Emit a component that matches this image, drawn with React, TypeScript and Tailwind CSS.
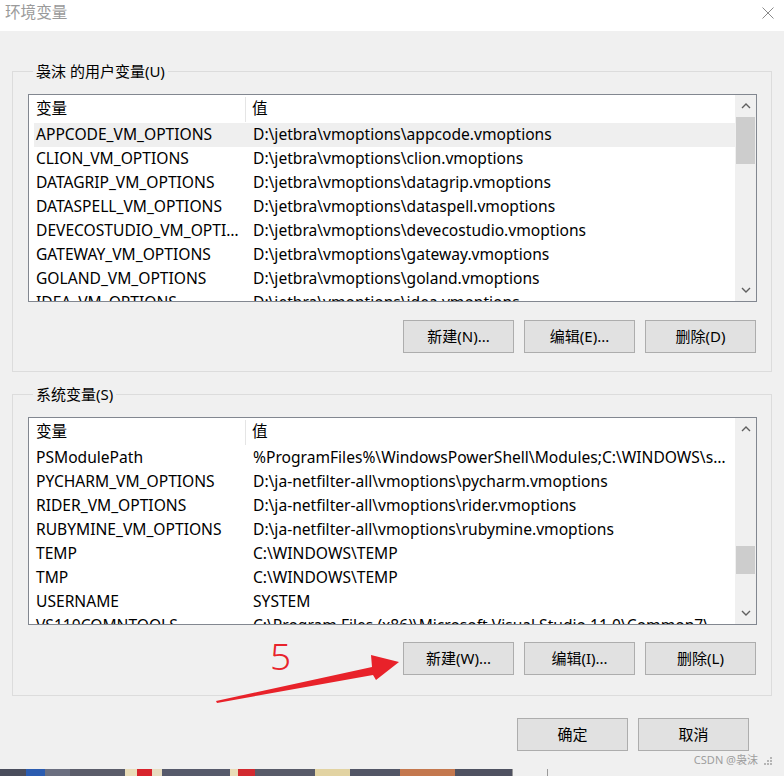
import React from "react"

type Row = { name: string; value: string }

const userVars: Row[] = [
  { name: "APPCODE_VM_OPTIONS", value: "D:\\jetbra\\vmoptions\\appcode.vmoptions" },
  { name: "CLION_VM_OPTIONS", value: "D:\\jetbra\\vmoptions\\clion.vmoptions" },
  { name: "DATAGRIP_VM_OPTIONS", value: "D:\\jetbra\\vmoptions\\datagrip.vmoptions" },
  { name: "DATASPELL_VM_OPTIONS", value: "D:\\jetbra\\vmoptions\\dataspell.vmoptions" },
  { name: "DEVECOSTUDIO_VM_OPTIONS", value: "D:\\jetbra\\vmoptions\\devecostudio.vmoptions" },
  { name: "GATEWAY_VM_OPTIONS", value: "D:\\jetbra\\vmoptions\\gateway.vmoptions" },
  { name: "GOLAND_VM_OPTIONS", value: "D:\\jetbra\\vmoptions\\goland.vmoptions" },
  { name: "IDEA_VM_OPTIONS", value: "D:\\jetbra\\vmoptions\\idea.vmoptions" },
]

const systemVars: Row[] = [
  { name: "PSModulePath", value: "%ProgramFiles%\\WindowsPowerShell\\Modules;C:\\WINDOWS\\system32\\WindowsPowerShell\\v1.0\\Modules" },
  { name: "PYCHARM_VM_OPTIONS", value: "D:\\ja-netfilter-all\\vmoptions\\pycharm.vmoptions" },
  { name: "RIDER_VM_OPTIONS", value: "D:\\ja-netfilter-all\\vmoptions\\rider.vmoptions" },
  { name: "RUBYMINE_VM_OPTIONS", value: "D:\\ja-netfilter-all\\vmoptions\\rubymine.vmoptions" },
  { name: "TEMP", value: "C:\\WINDOWS\\TEMP" },
  { name: "TMP", value: "C:\\WINDOWS\\TEMP" },
  { name: "USERNAME", value: "SYSTEM" },
  { name: "VS110COMNTOOLS", value: "C:\\Program Files (x86)\\Microsoft Visual Studio 11.0\\Common7\\Tools\\" },
]

const font = "font-['Noto_Sans','Noto_Sans_CJK_SC',sans-serif]"

function Chevron({ up }: { up?: boolean }) {
  return (
    <svg width="10" height="6" viewBox="0 0 10 6" className={up ? "" : "rotate-180"}>
      <path d="M1 5 L5 1 L9 5" fill="none" stroke="#606060" strokeWidth="1.4" />
    </svg>
  )
}

function VarList({ rows, highlight, thumbTop, thumbHeight }: { rows: Row[]; highlight?: number; thumbTop: number; thumbHeight: number }) {
  return (
    <div className="flex w-full h-[208px] border border-[#828790] bg-white overflow-hidden">
      <div className="flex-1 min-w-0 pl-[5px] overflow-hidden">
        <div className="flex h-[28px] items-center">
          <div className="w-[212px] h-[25px] flex items-center pl-[2px] border-r border-[#e5e5e5] shrink-0">变量</div>
          <div className="pl-[6px]">值</div>
        </div>
        {rows.map((r, i) => (
          <div key={r.name} className={`flex h-[24px] items-center ${i === highlight ? "bg-[#efefef]" : ""}`}>
            <div className="w-[212px] shrink-0 pl-[2px] pr-[6px] truncate">{r.name}</div>
            <div className="flex-1 min-w-0 pl-[7px] pr-[8px] truncate">{r.value}</div>
          </div>
        ))}
      </div>
      <div className="w-[21px] shrink-0 bg-[#f0f0f0] flex flex-col">
        <div className="h-[22px] flex items-center justify-center">
          <Chevron up />
        </div>
        <div className="flex-1">
          <div className="bg-[#cdcdcd] mx-[1px]" style={{ marginTop: thumbTop, height: thumbHeight }} />
        </div>
        <div className="h-[22px] flex items-center justify-center">
          <Chevron />
        </div>
      </div>
    </div>
  )
}

function Btn({ children }: { children: React.ReactNode }) {
  return (
    <button className="w-[111px] h-[33px] bg-[#e1e1e1] border border-[#adadad] text-[15px] text-black flex items-center justify-center">
      {children}
    </button>
  )
}

function Group({ title, children }: { title: string; children: React.ReactNode }) {
  return (
    <fieldset className="min-w-0 border border-[#dcdcdc] pl-[15px] pr-[14px]">
      <legend className="ml-[5px] px-[3px] leading-[20px] text-[15px]">{title}</legend>
      {children}
    </fieldset>
  )
}

function Taskbar() {
  const segs = [
    { w: 26, c: "bg-[#4a4d5c]" },
    { w: 19, c: "bg-[#2b5cb0]" },
    { w: 25, c: "bg-[#6b6f80]" },
    { w: 55, c: "bg-[#5b5d6a]" },
    { w: 12, c: "bg-[#e9dcb8]" },
    { w: 15, c: "bg-[#d8242c]" },
    { w: 10, c: "bg-[#e6dcc0]" },
    { w: 68, c: "bg-[#565a6b]" },
    { w: 8, c: "bg-[#e9dcb8]" },
    { w: 17, c: "bg-[#d22a30]" },
    { w: 60, c: "bg-[#585b69]" },
    { w: 35, c: "bg-[#e2d3a2]" },
    { w: 50, c: "bg-[#535666]" },
    { w: 55, c: "bg-[#c4784e]" },
    { w: 57, c: "bg-[#4f5261]" },
  ]
  return (
    <div className="flex h-[7px] overflow-hidden">
      {segs.map((s, i) => (
        <div key={i} className={`${s.c} shrink-0`} style={{ width: s.w }} />
      ))}
      <div className="w-[36px] shrink-0 border-x border-[#9a9a9a] bg-[#f0f0f0]" />
      <div className="flex-1 bg-[#f0f0f0]" />
    </div>
  )
}

export default function App() {
  return (
    <div className={`relative w-[784px] h-[776px] overflow-hidden bg-[#f0f0f0] text-[15.6px] text-black ${font}`}>
      <div className="h-[31px] bg-white flex items-center justify-between pl-[5px] pr-[10px]">
        <span className="text-[#9a9a9a] text-[15.6px] leading-[20px] -mt-[7px]">环境变量</span>
        <svg width="12" height="12" viewBox="0 0 12 12" className="-mt-[5px]">
          <path d="M0.5 0.5 L11.5 11.5 M11.5 0.5 L0.5 11.5" stroke="#8a8a8a" strokeWidth="1" />
        </svg>
      </div>

      <div className="px-[12px] pt-[30px] flex flex-col">
        <Group title="袅沫 的用户变量(U)">
          <div className="pt-[13px]">
            <VarList rows={userVars} highlight={0} thumbTop={0} thumbHeight={47} />
          </div>
          <div className="flex justify-end gap-[10px] pt-[18px] pb-[18px] pr-[1px]">
            <Btn>新建(N)...</Btn>
            <Btn>编辑(E)...</Btn>
            <Btn>删除(D)</Btn>
          </div>
        </Group>

        <div className="h-[12px]" />

        <Group title="系统变量(S)">
          <div className="pt-[13px]">
            <VarList rows={systemVars} thumbTop={106} thumbHeight={28} />
          </div>
          <div className="flex justify-end gap-[10px] pt-[17px] pb-[20px] pr-[1px]">
            <Btn>新建(W)...</Btn>
            <Btn>编辑(I)...</Btn>
            <Btn>删除(L)</Btn>
          </div>
        </Group>

        <div className="flex justify-end gap-[10px] pt-[22px] pr-[23px]">
          <Btn>确定</Btn>
          <Btn>取消</Btn>
        </div>

        <div className="flex justify-end items-center gap-[6px] h-[19px] text-[11px] text-[#9e9e9e]">
          <span>CSDN @袅沫</span>
          <svg width="8" height="8" viewBox="0 0 8 8">
            <rect x="6" y="0" width="2" height="2" fill="#b5b5b5" />
            <rect x="3" y="3" width="2" height="2" fill="#b5b5b5" />
            <rect x="6" y="3" width="2" height="2" fill="#b5b5b5" />
            <rect x="0" y="6" width="2" height="2" fill="#b5b5b5" />
            <rect x="3" y="6" width="2" height="2" fill="#b5b5b5" />
            <rect x="6" y="6" width="2" height="2" fill="#b5b5b5" />
          </svg>
        </div>
      </div>

      <div className="absolute left-0 right-0 bottom-0">
        <Taskbar />
      </div>

      {/* red annotation */}
      <span className="absolute left-[270px] top-[634px] text-[37px] leading-[44px] font-light text-[#e8232b]">5</span>
      <svg className="absolute left-0 top-0" width="784" height="776" viewBox="0 0 784 776">
        <polygon points="216,701 372,667 371,655 399,662 376,680 373,675 217,703" fill="#e8222a" />
      </svg>
    </div>
  )
}
